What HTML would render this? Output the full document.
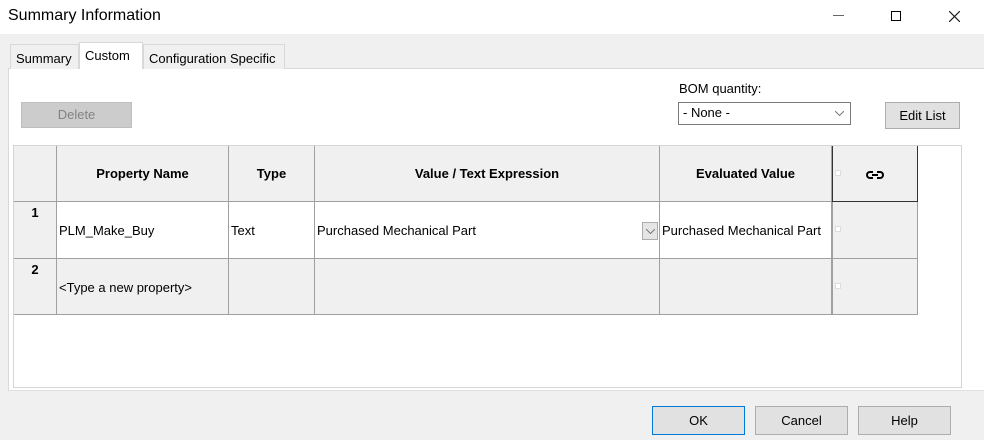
<!DOCTYPE html>
<html><head><style>
*{box-sizing:border-box;margin:0;padding:0}
body{width:984px;height:440px;background:#f0f0f0;font-family:"Segoe UI","Liberation Sans",sans-serif;font-size:13px;color:#000;position:relative;overflow:hidden}
.abs{position:absolute}
.title{left:0;top:0;width:984px;height:34px;background:#fff}
.tab{top:44px;height:25px;border:1px solid #d9d9d9;border-bottom:none;background:#f0f0f0;padding:6px 5px 0;font-size:13px}
.btn{border:1px solid #adadad;background:#e1e1e1;text-align:center;font-size:13px}
.grid{left:13px;top:145px;width:949px;height:243px;background:#fff;border:1px solid #d4d4d4}
.c{position:absolute;border-right:1px solid #a0a0a0;border-bottom:1px solid #a0a0a0;background:#f0f0f0}
.h{font-weight:bold;text-align:center;line-height:56px}
.t{padding-left:2px;line-height:58px}
.n{font-weight:bold;text-align:center;padding-top:3px}
.cb{position:absolute;width:6px;height:6px;border:1px solid #ddd;background:#fff;left:2px}
</style></head><body>
<div class="abs title"><div class="abs" style="left:8px;top:7px;font-size:16px">Summary Information</div>
<div class="abs" style="left:833px;top:15px;width:11px;height:1px;background:#666"></div>
<div class="abs" style="left:891px;top:11px;width:10px;height:10px;border:1px solid #000"></div>
<svg class="abs" style="left:949px;top:11px" width="11" height="11"><path d="M0 0L11 11M11 0L0 11" stroke="#222" stroke-width="1.2"/></svg>
</div>
<div class="abs" style="left:8px;top:68px;width:976px;height:1px;background:#d9d9d9"></div>
<div class="abs" style="left:8px;top:69px;width:976px;height:322px;background:#fff;border-left:1px solid #d9d9d9;border-bottom:1px solid #e0e0e0"></div>
<div class="abs tab" style="left:10px;width:69px">Summary</div>
<div class="abs tab" style="left:79px;top:42px;height:27px;background:#fff;padding-top:5px;width:64px">Custom</div>
<div class="abs tab" style="left:143px;width:142px">Configuration Specific</div>
<div class="abs btn" style="left:21px;top:102px;width:111px;height:26px;line-height:24px;background:#cccccc;border-color:#bfbfbf;color:#838383">Delete</div>
<div class="abs" style="left:679px;top:81px">BOM quantity:</div>
<div class="abs" style="left:678px;top:102px;width:173px;height:23px;border:1px solid #7a7a7a;background:#fff;padding:2px 4px">- None -<svg class="abs" style="right:6px;top:8px" width="9" height="5"><path d="M0 0L4.5 4.5L9 0" stroke="#777" fill="none"/></svg></div>
<div class="abs btn" style="left:885px;top:102px;width:75px;height:27px;line-height:26px">Edit List</div>
<div class="abs grid">
<div class="c" style="left:0;top:0;width:43px;height:56px"></div>
<div class="c h" style="left:43px;top:0;width:172px;height:56px">Property Name</div>
<div class="c h" style="left:215px;top:0;width:86px;height:56px">Type</div>
<div class="c h" style="left:301px;top:0;width:345px;height:56px">Value / Text Expression</div>
<div class="c h" style="left:646px;top:0;width:172px;height:56px">Evaluated Value</div>
<div class="c h" style="left:818px;top:0;width:86px;height:56px;border-left:1px solid #333;border-bottom:1px solid #333;border-right:1px solid #333"><span class="cb" style="top:24px"></span><svg width="18" height="10" viewBox="0 0 18 10" style="vertical-align:middle"><path d="M7 2H4a3 3 0 0 0 0 6h3M11 2h3a3 3 0 0 1 0 6h-3M6 5h6" stroke="#000" stroke-width="2" fill="none"/></svg></div>
<div class="c n" style="left:0;top:56px;width:43px;height:57px">1</div>
<div class="c t" style="left:43px;top:56px;width:172px;height:57px;background:#fff">PLM_Make_Buy</div>
<div class="c t" style="left:215px;top:56px;width:86px;height:57px;background:#fff">Text</div>
<div class="c t" style="left:301px;top:56px;width:345px;height:57px;background:#fff">Purchased Mechanical Part<div class="abs" style="right:1px;top:20px;width:16px;height:18px;background:#e5e5e5;border:1px solid #adadad"><svg class="abs" style="left:3px;top:6px" width="9" height="5"><path d="M0 0L4.5 4.5L9 0" stroke="#777" fill="none"/></svg></div></div>
<div class="c t" style="left:646px;top:56px;width:172px;height:57px;background:#fff">Purchased Mechanical Part</div>
<div class="c" style="left:818px;top:56px;width:86px;height:57px;border-left:1px solid #a0a0a0"><span class="cb" style="top:24px"></span></div>
<div class="c n" style="left:0;top:113px;width:43px;height:56px">2</div>
<div class="c t" style="left:43px;top:113px;width:172px;height:56px">&lt;Type a new property&gt;</div>
<div class="c" style="left:215px;top:113px;width:86px;height:56px"></div>
<div class="c" style="left:301px;top:113px;width:345px;height:56px"></div>
<div class="c" style="left:646px;top:113px;width:172px;height:56px"></div>
<div class="c" style="left:818px;top:113px;width:86px;height:56px;border-left:1px solid #a0a0a0"><span class="cb" style="top:24px"></span></div>
</div>
<div class="abs btn" style="left:652px;top:406px;width:93px;height:29px;line-height:27px;border:1px solid #0078d7">OK</div>
<div class="abs btn" style="left:755px;top:406px;width:93px;height:29px;line-height:27px">Cancel</div>
<div class="abs btn" style="left:858px;top:406px;width:93px;height:29px;line-height:27px">Help</div>
</body></html>
